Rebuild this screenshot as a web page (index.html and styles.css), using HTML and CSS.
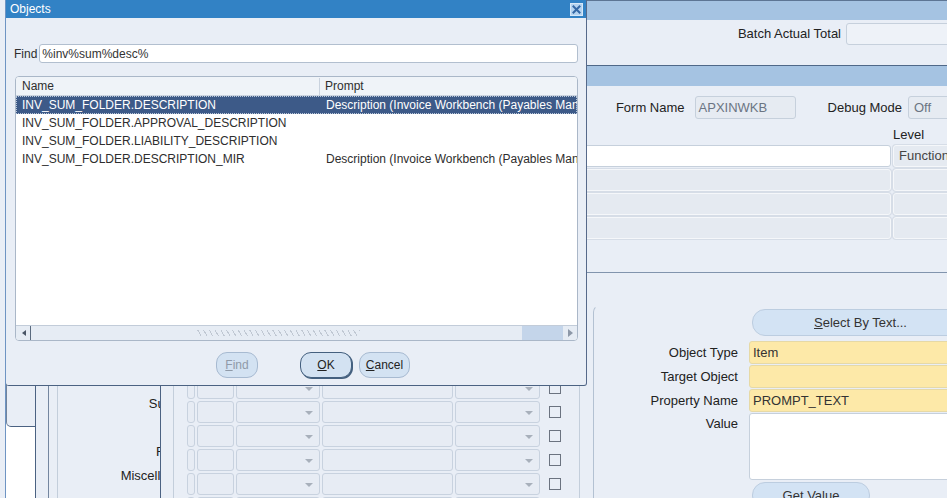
FILE: index.html
```html
<!DOCTYPE html>
<html lang="en">
<head>
    <meta charset="UTF-8">
    <meta name="viewport" content="width=device-width, initial-scale=1.0">
    <title>Objects</title>
    <link rel="stylesheet" href="styles.css">
</head>
<body>
    <div class="screen">
        <div class="edge"></div>
        <div class="window">
            <div class="band"></div>
            <div class="batch-row">
                <span class="label">Batch Actual Total</span>
                <div class="field batch-field"></div>
            </div>
            <div class="band band-split"></div>
            <div class="info-row">
                <span class="label form-label">Form Name</span>
                <div class="field readonly form-field">APXINWKB</div>
                <span class="label debug-label">Debug Mode</span>
                <div class="field readonly debug-field">Off</div>
            </div>
            <div class="rules">
                <div class="level-head">Level</div>
                <div class="rule-field current"></div>
                <div class="rule-field level">Function</div>
                <div class="rule-field"></div>
                <div class="rule-field level"></div>
                <div class="rule-field"></div>
                <div class="rule-field level"></div>
                <div class="rule-field"></div>
                <div class="rule-field level"></div>
            </div>
            <div class="divider"></div>

            <div class="lower">
                <div class="stub"><div class="stub-box"></div></div>
                <div class="strip strip-dark"></div>
                <div class="strip strip-light"></div>
                <div class="labels">
                    <div>Subtotals</div>
                    <div>&nbsp;</div>
                    <div>Freights</div>
                    <div>Miscellaneous</div>
                </div>
                <div class="strip strip-light"></div>
                <div class="grid-area">
                    <div class="lines">
                        <div class="cell"></div><div class="cell"></div><div class="cell drop"></div><div class="cell"></div><div class="cell drop"></div><div class="check"></div>
                        <div class="cell"></div><div class="cell"></div><div class="cell drop"></div><div class="cell"></div><div class="cell drop"></div><div class="check"></div>
                        <div class="cell"></div><div class="cell"></div><div class="cell drop"></div><div class="cell"></div><div class="cell drop"></div><div class="check"></div>
                        <div class="cell"></div><div class="cell"></div><div class="cell drop"></div><div class="cell"></div><div class="cell drop"></div><div class="check"></div>
                        <div class="cell"></div><div class="cell"></div><div class="cell drop"></div><div class="cell"></div><div class="cell drop"></div><div class="check"></div>
                        <div class="cell"></div><div class="cell"></div><div class="cell drop"></div><div class="cell"></div><div class="cell drop"></div><div class="check"></div>
                    </div>
                </div>
                <div class="gap-col"></div>
                <div class="right-panel">
                    <div class="props">
                        <div class="pill select-btn"><u>S</u>elect By Text...</div>
                        <div class="prop-label">Object Type</div>
                        <div class="prop-field">Item</div>
                        <div class="prop-label">Target Object</div>
                        <div class="prop-field"></div>
                        <div class="prop-label">Property Name</div>
                        <div class="prop-field">PROMPT_TEXT</div>
                        <div class="prop-label value-label">Value</div>
                        <div class="value-field"></div>
                        <div class="pill get-btn">Get Value</div>
                    </div>
                </div>
            </div>
        </div>

        <div class="dialog">
            <div class="dlg-title">
                <span>Objects</span>
                <span class="dlg-close">
                    <svg width="11" height="11" viewBox="0 0 11 11">
                        <path d="M2.5 2.5 L8.5 8.5 M8.5 2.5 L2.5 8.5" stroke="#3468a6" stroke-width="2" stroke-linecap="square"/>
                    </svg>
                </span>
            </div>
            <div class="dlg-body">
                <div class="find-row">
                    <label for="find">Find</label>
                    <input type="text" id="find" value="%inv%sum%desc%">
                </div>
                <div class="obj-list">
                    <div class="list-head">
                        <div class="col-name">Name</div>
                        <div class="col-prompt">Prompt</div>
                    </div>
                    <div class="list-row selected">
                        <div class="col-name">INV_SUM_FOLDER.DESCRIPTION</div>
                        <div class="col-prompt">Description (Invoice Workbench (Payables Manager))</div>
                    </div>
                    <div class="list-row">
                        <div class="col-name">INV_SUM_FOLDER.APPROVAL_DESCRIPTION</div>
                        <div class="col-prompt"></div>
                    </div>
                    <div class="list-row">
                        <div class="col-name">INV_SUM_FOLDER.LIABILITY_DESCRIPTION</div>
                        <div class="col-prompt"></div>
                    </div>
                    <div class="list-row">
                        <div class="col-name">INV_SUM_FOLDER.DESCRIPTION_MIR</div>
                        <div class="col-prompt">Description (Invoice Workbench (Payables Manager))</div>
                    </div>
                    <div class="list-fill"></div>
                    <div class="hscroll">
                        <div class="sb-left"><span class="tri-left"></span></div>
                        <div class="sb-track"><div class="sb-grip"></div></div>
                        <div class="sb-thumb"></div>
                        <div class="sb-right"><span class="tri-right"></span></div>
                    </div>
                </div>
                <div class="dlg-buttons">
                    <div class="dlg-btn find-btn"><u>F</u>ind</div>
                    <div class="dlg-btn ok-btn"><u>O</u>K</div>
                    <div class="dlg-btn cancel-btn"><u>C</u>ancel</div>
                </div>
            </div>
        </div>
    </div>
</body>
</html>
```

FILE: styles.css
```css
* {
    box-sizing: border-box;
}

body {
    margin: 0;
    background: #e9eef6;
    font-family: "Liberation Sans", Arial, sans-serif;
    font-size: 13px;
    color: #222;
}

.screen {
    position: relative;
    width: 947px;
    height: 498px;
    overflow: hidden;
    display: flex;
    background: #e9eef6;
}

.edge {
    width: 5px;
}

.window {
    flex: 1;
    min-width: 0;
    border-left: 1px solid #6e94c3;
    overflow: hidden;
}

/* top of the underlying form */

.band {
    height: 20px;
    background: #a5c3e2;
    border-top: 1px solid #5d7594;
}

.band-split {
    height: 21px;
    border-top-color: #4f6888;
}

.label {
    line-height: 22px;
    white-space: nowrap;
}

.field {
    height: 22px;
    border: 1px solid #c6d0dc;
    border-radius: 3px;
    background: #eef2f8;
}

.batch-row {
    height: 45px;
    padding-top: 3px;
    display: flex;
    justify-content: flex-end;
    align-items: flex-start;
}

.batch-row .label {
    margin-right: 5px;
}

.batch-field {
    width: 121px;
    margin-right: -20px;
}

.info-row {
    height: 33px;
    padding-top: 10px;
    display: flex;
    justify-content: flex-end;
    align-items: center;
}

.readonly {
    height: 23px;
    background: #e6ebf2;
    color: #6b7583;
    padding-left: 3px;
    line-height: 21px;
}

.form-label {
    margin-right: 10px;
}

.form-field {
    width: 101px;
    margin-right: 32px;
}

.debug-label {
    margin-right: 6px;
}

.debug-field {
    width: 52px;
    margin-right: -13px;
    padding-left: 5px;
}

.rules {
    display: grid;
    grid-template-columns: 1fr 67px;
    column-gap: 2px;
    row-gap: 2px;
    margin-left: 200px;
    margin-right: -13px;
}

.level-head {
    grid-column: 2;
    height: 24px;
    display: flex;
    align-items: flex-end;
    line-height: 15px;
    padding-bottom: 1px;
}

.rule-field {
    height: 22px;
    border: 1px solid #f5f7fa;
    border-radius: 3px;
    background: #e5eaf1;
    box-shadow: 0 0 0 1px #d6dde7;
}

.rule-field.current {
    background: #fff;
    border-color: #c6d0dc;
    box-shadow: none;
}

.rule-field.level {
    padding-left: 5px;
    line-height: 20px;
    color: #444;
}

.divider {
    margin-top: 33px;
    border-top: 1px solid #8194ad;
}

/* lower part of the form */

.lower {
    height: 225px;
    display: flex;
}

.stub {
    width: 30px;
    background: #fff;
    border-right: 1px solid #4b6282;
}

.stub-box {
    height: 154px;
    background: #e9eef6;
    border-left: 1px solid #71839c;
    border-bottom: 1px solid #4b6282;
    border-bottom-left-radius: 5px;
}

.strip {
    width: 13px;
}

.strip-dark {
    border-right: 1px solid #74869f;
}

.strip-light {
    border-right: 1px solid #c3cedb;
}

.lower .strip-light:nth-child(3) {
    width: 9px;
}

.labels {
    width: 103px;
    padding-top: 119px;
    border-right: 1px solid #4b6282;
    overflow: hidden;
}

.labels div {
    width: 145px;
    text-align: right;
    line-height: 24px;
    white-space: nowrap;
}

.grid-area {
    width: 406px;
    padding-left: 13px;
    padding-top: 104px;
    border-right: 1px solid #c3cedb;
}

.lines {
    display: grid;
    grid-template-columns: 8px 37px 84px 131px 85px 12px;
    column-gap: 2px;
    row-gap: 2px;
}

.cell {
    position: relative;
    height: 22px;
    border: 1px solid #c8d2df;
    border-radius: 3px;
    background: #e7ecf4;
}

.cell.drop::after {
    content: "";
    position: absolute;
    right: 6px;
    top: 9px;
    border-left: 4px solid transparent;
    border-right: 4px solid transparent;
    border-top: 4px solid #a8b0bb;
}

.check {
    width: 12px;
    height: 12px;
    margin-left: 7px;
    align-self: center;
    border: 1px solid #6b7380;
}

.gap-col {
    width: 13px;
}

.right-panel {
    flex: 1;
    margin-top: 32px;
    border-left: 1px solid #b3c1d2;
    border-top: 1px solid transparent;
    border-top-left-radius: 7px;
}

.props {
    display: grid;
    grid-template-columns: 144px 1fr;
    column-gap: 11px;
    row-gap: 1px;
    padding-top: 3px;
    margin-right: -30px;
}

.pill {
    grid-column: 2;
    height: 27px;
    margin-left: 3px;
    border: 1px solid #bccde0;
    border-radius: 13px;
    background: #d3e3f4;
    text-align: center;
    line-height: 25px;
    color: #333;
}

.select-btn {
    margin-bottom: 4px;
    padding-right: 8px;
}

.get-btn {
    width: 118px;
    margin-top: 1px;
}

.prop-label {
    text-align: right;
    line-height: 23px;
    white-space: nowrap;
}

.value-label {
    line-height: 21px;
}

.prop-field {
    height: 23px;
    border: 1px solid #e6d9a6;
    border-radius: 3px;
    background: #fde9a8;
    padding-left: 3px;
    line-height: 21px;
    color: #333;
}

.prop-field:first-of-type {
    padding-left: 9px;
}

.value-field {
    height: 67px;
    border: 1px solid #c6d0dc;
    border-radius: 3px;
    background: #fff;
}

/* Objects dialog */

.dialog {
    position: absolute;
    left: 6px;
    top: 0;
    width: 581px;
    height: 386px;
    background: #e9eef6;
    border-right: 1px solid #56698a;
    border-bottom: 1px solid #4b6282;
    border-bottom-right-radius: 3px;
    border-bottom-left-radius: 3px;
    font-size: 12px;
    color: #2e2e2e;
}

.dlg-title {
    height: 18px;
    background: #3282c5;
    color: #fff;
    padding: 0 3px 0 4px;
    display: flex;
    align-items: center;
    justify-content: space-between;
}

.dlg-close {
    width: 13px;
    height: 13px;
    display: flex;
    align-items: center;
    justify-content: center;
    background: #b4d3f0;
    border: 1px solid #d7e8f8;
}

.dlg-body {
    padding: 0 8px 0 9px;
}

.find-row {
    margin-top: 26px;
    height: 19px;
    display: flex;
    align-items: center;
}

.find-row label {
    margin-left: -1px;
    margin-right: 1px;
}

.find-row input {
    flex: 1;
    height: 19px;
    margin: 0 0 0 1px;
    padding: 0 0 0 2px;
    border: 1px solid #b2bfcf;
    border-radius: 3px;
    background: #fff;
    font-family: inherit;
    font-size: 12px;
    color: #333;
}

.obj-list {
    margin-top: 13px;
    height: 265px;
    border: 1px solid #aab7c8;
    border-radius: 4px;
    background: #fff;
    display: flex;
    flex-direction: column;
    overflow: hidden;
}

.list-head {
    height: 19px;
    padding-top: 1px;
    display: flex;
    background: #eff3f8;
    border-bottom: 1px solid #c9d2de;
    line-height: 17px;
}

.list-head .col-name {
    border-right: 1px solid #c9d2de;
}

.col-name {
    width: 304px;
    padding-left: 6px;
    flex-shrink: 0;
}

.col-prompt {
    padding-left: 5px;
    white-space: nowrap;
}

.list-row {
    height: 18px;
    display: flex;
    line-height: 18px;
    white-space: nowrap;
    overflow: hidden;
}

.list-row .col-prompt {
    padding-left: 6px;
}

.list-row.selected {
    background: #3d5a88;
    color: #fff;
    outline: 1px dotted #b9c6d8;
    outline-offset: -1px;
}

.list-fill {
    flex: 1;
}

.hscroll {
    height: 15px;
    display: flex;
    border-top: 1px solid #c2ccd9;
    background: #e6ecf4;
}

.sb-left {
    width: 15px;
    display: flex;
    align-items: center;
    justify-content: flex-end;
    padding-right: 4px;
    border-right: 1px solid #5a6a7e;
    border-radius: 0 0 0 4px;
}

.tri-left {
    border-top: 3px solid transparent;
    border-bottom: 3px solid transparent;
    border-right: 4px solid #4a5566;
}

.sb-track {
    flex: 1;
    display: flex;
    align-items: center;
}

.sb-grip {
    width: 164px;
    height: 6px;
    margin-left: 165px;
    background: repeating-linear-gradient(60deg, transparent 0 4px, #c0c8d3 4px 5px);
}

.sb-thumb {
    width: 41px;
    background: #c4d5ea;
}

.sb-right {
    width: 14px;
    display: flex;
    align-items: center;
    justify-content: center;
}

.tri-right {
    border-top: 4px solid transparent;
    border-bottom: 4px solid transparent;
    border-left: 5px solid #8d98a8;
}

.dlg-buttons {
    margin-top: 11px;
    padding-left: 201px;
    display: flex;
}

.dlg-btn {
    height: 26px;
    border: 1px solid #a7bad1;
    border-radius: 11px;
    background: #d3e2f2;
    text-align: center;
    line-height: 24px;
    color: #222;
}

.find-btn {
    width: 42px;
    margin-right: 42px;
    color: #8f9aa8;
}

.ok-btn {
    width: 52px;
    margin-right: 7px;
    border-color: #44607f;
    box-shadow: 1px 1px 0 #44607f;
}

.cancel-btn {
    width: 51px;
}
```
